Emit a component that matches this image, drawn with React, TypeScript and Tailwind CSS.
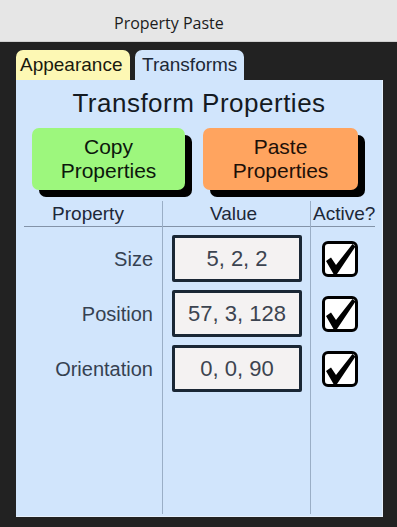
type Row = {
    label: string
    value: string
    active: boolean
}

const rows: Row[] = [
    { label: "Size", value: "5, 2, 2", active: true },
    { label: "Position", value: "57, 3, 128", active: true },
    { label: "Orientation", value: "0, 0, 90", active: true },
]

const CheckBox = ({ checked }: { checked: boolean }) => (
    <div className="w-[36px] h-[36px] border-[3px] border-black rounded-[6px] bg-white relative">
        {checked && (
            <svg viewBox="0 0 36 36" className="absolute -left-[3px] -top-[3px] w-[36px] h-[36px]">
                <path d="M4 20 L9 16.5 L14 24 L30.5 3 L33.5 5.5 L15 33 L11.5 33 Z" fill="#000" />
            </svg>
        )}
    </div>
)

const App = () => (
    <div className="w-[397px] h-[527px] bg-[#222222] overflow-hidden flex flex-col" style={{ fontFamily: '"Liberation Sans", Arial, sans-serif' }}>
        <div
            className="h-[42px] shrink-0 bg-[#e6e6e6] border-b border-[#d0d0d0] flex items-center pt-[4px] pl-[114px] text-[16px] font-medium text-[#1c1c1c]"
            style={{ fontFamily: '"Open Sans", "Noto Sans", sans-serif' }}
        >
            Property Paste
        </div>

        <div className="flex items-end gap-[5px] ml-[16px] mt-[8px]">
            <div className="w-[114px] h-[30px] rounded-t-[7px] bg-[#fdf8b4] pl-[4px] text-[19px] leading-[30px] text-[#1a1a0e]">
                Appearance
            </div>
            <div className="w-[109px] h-[30px] rounded-t-[7px] bg-[#d1e5fc] pl-[7px] text-[19px] leading-[30px] text-[#1d2836]">
                Transforms
            </div>
        </div>

        <div className="ml-[16px] w-[367px] h-[437px] bg-[#d1e5fc] border-r border-b border-[#e6f0fc] flex flex-col">
            <h1 className="mt-[8px] text-center text-[26px] leading-[30px] tracking-[0.5px] text-[#141a22]">
                Transform Properties
            </h1>

            <div className="flex gap-[18px] ml-[16px] mt-[10px]">
                <button
                    type="button"
                    className="w-[153px] h-[62px] rounded-[7px] bg-[#9df77d] shadow-[7px_7px_0_#000] text-[21px] leading-[24px] text-[#0c180c]"
                >
                    Copy
                    <br />
                    Properties
                </button>
                <button
                    type="button"
                    className="w-[155px] h-[62px] rounded-[7px] bg-[#ffa45f] shadow-[7px_7px_0_#000] text-[21px] leading-[24px] text-[#1e1008]"
                >
                    Paste
                    <br />
                    Properties
                </button>
            </div>

            <div className="mt-[11px] ml-[8px] w-[351px] flex-1 flex flex-col pb-[2px]">
                <div className="grid grid-cols-[139px_148px_64px] h-[26px] border-b border-[#8393a8] text-[19px] leading-[26px] text-[#1d2838]">
                    <div className="border-r border-[#9aaec6] text-center pr-[10px]">Property</div>
                    <div className="border-r border-[#9aaec6] text-center pr-[6px]">Value</div>
                    <div className="text-center pl-[2px]">Active?</div>
                </div>
                <div className="grid grid-cols-[139px_148px_64px] flex-1">
                    <div className="border-r border-[#9aaec6] flex flex-col gap-[8px] pt-[8px] pr-[9px]">
                        {rows.map((r) => (
                            <div key={r.label} className="h-[47px] flex items-center justify-end text-[20px] text-[#354151]">
                                {r.label}
                            </div>
                        ))}
                    </div>
                    <div className="border-r border-[#9aaec6] flex flex-col gap-[8px] pt-[8px] pl-[9px]">
                        {rows.map((r) => (
                            <div
                                key={r.label}
                                className="w-[130px] h-[47px] border-[3px] border-[#1a2735] rounded-[2px] bg-[#f4f2f2] flex items-center justify-center text-[22px] text-[#3c4450]"
                            >
                                {r.value}
                            </div>
                        ))}
                    </div>
                    <div className="flex flex-col gap-[8px] pt-[8px] pl-[11px]">
                        {rows.map((r) => (
                            <div key={r.label} className="h-[47px] flex items-center">
                                <CheckBox checked={r.active} />
                            </div>
                        ))}
                    </div>
                </div>
            </div>
        </div>
    </div>
)

export default App
